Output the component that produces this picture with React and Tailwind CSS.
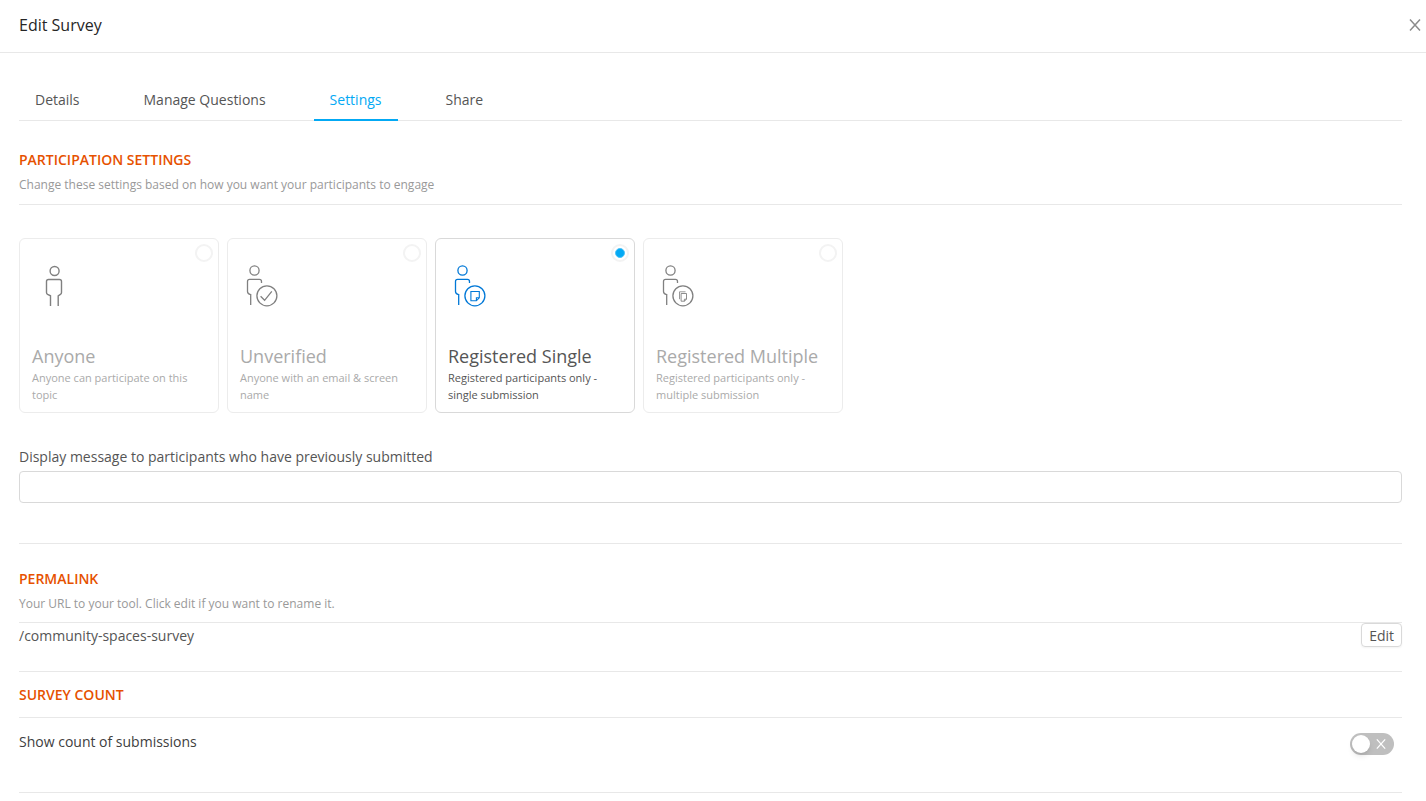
import React, { useState } from "react";

const tabs = ["Details", "Manage Questions", "Settings", "Share"];

const participationOptions = [
  {
    id: "anyone",
    title: "Anyone",
    description: "Anyone can participate on this topic",
  },
  {
    id: "unverified",
    title: "Unverified",
    description: "Anyone with an email & screen name",
  },
  {
    id: "single",
    title: "Registered Single",
    description: "Registered participants only - single submission",
  },
  {
    id: "multiple",
    title: "Registered Multiple",
    description: "Registered participants only - multiple submission",
  },
];

function ParticipantIcon({ type }) {
  if (type === "anyone") {
    return (
      <svg className="h-12 w-12" viewBox="0 0 48 48" fill="none" stroke="currentColor" strokeWidth="1.4">
        <circle cx="22.6" cy="9" r="4.5" />
        <path d="M18.5 44V33.8L15.6 32.4Q14.5 31.8 14.5 30.5V19.5Q14.5 17.5 16.5 17.5H27.5Q29.5 17.5 29.5 19.5V30.5Q29.5 31.8 28.4 32.4L26.2 33.8V44" />
      </svg>
    );
  }

  return (
    <svg className="h-12 w-12" viewBox="0 0 48 48" fill="none" stroke="currentColor" strokeWidth="1.3">
      <circle cx="14.5" cy="8.5" r="4.6" />
      <path d="M21.5 21V19.5Q21.5 17.4 19.4 17.4H9.6Q7.5 17.4 7.5 19.5V29.5Q7.5 32 10.7 32.6V43" />
      <circle cx="26.9" cy="33.8" r="10" />
      {type === "unverified" && <path d="M20.6 34.3L24.6 38.3L31.8 29.4" />}
      {type === "single" && (
        <path d="M22.9 29.5H31.3V35.8L28.4 38.8H22.9ZM31.3 35.8H28.4V38.8" strokeWidth="1.1" />
      )}
      {type === "multiple" && (
        <>
          <path d="M25.1 31.5H30.5V37.2L28.4 39.2H25.1ZM30.5 37.2H28.4V39.2" strokeWidth="0.9" />
          <path d="M23.5 37.2V29.8H29.5" strokeWidth="0.8" />
        </>
      )}
    </svg>
  );
}

function CloseIcon({ className }) {
  return (
    <svg className={className} viewBox="0 0 12 12" fill="none" stroke="currentColor" strokeWidth="1.5">
      <path d="M1 0.5L11 11.5M11 0.5L1 11.5" />
    </svg>
  );
}

function SectionHeader({ title, subtitle, className }) {
  return (
    <div className={`border-b border-[#e8e8e8] ${className}`}>
      <h2 className="text-sm leading-[22px] font-semibold text-[#e65100] uppercase">
        {title}
      </h2>
      {subtitle && (
        <p className="mt-1 text-xs leading-5 text-[#999999]">{subtitle}</p>
      )}
    </div>
  );
}

export default function App() {
  const [activeTab, setActiveTab] = useState("Settings");
  const [participation, setParticipation] = useState("single");
  const [message, setMessage] = useState("");
  const [showCount, setShowCount] = useState(false);

  return (
    <div className="min-h-screen bg-white font-['Open_Sans',sans-serif] text-sm leading-[22px] text-[#555555]">
      <header className="flex items-center justify-between border-b border-[#e8e8e8] pt-[14px] pb-4 pr-[5px] pl-[19px]">
        <h1 className="text-base leading-[22px] text-[#262626]">Edit Survey</h1>
        <button type="button" aria-label="Close" className="cursor-pointer text-[#8c8c8c]">
          <CloseIcon className="h-3 w-3" />
        </button>
      </header>

      <main className="pt-6 pr-6 pl-[19px]">
        <nav className="flex gap-8 border-b border-[#e8e8e8]">
          {tabs.map((tab) => (
            <button
              key={tab}
              type="button"
              onClick={() => setActiveTab(tab)}
              className={`-mb-px cursor-pointer border-b-2 px-4 pt-3 pb-2 ${
                activeTab === tab
                  ? "border-[#03a9f4] text-[#03a9f4]"
                  : "border-transparent"
              }`}
            >
              {tab}
            </button>
          ))}
        </nav>

        <SectionHeader
          title="Participation Settings"
          subtitle="Change these settings based on how you want your participants to engage"
          className="mt-7 pb-[9px]"
        />

        <div className="mt-[33px] flex flex-wrap gap-2">
          {participationOptions.map((option) => {
            const selected = participation === option.id;
            return (
              <label
                key={option.id}
                className={`flex w-[200px] cursor-pointer flex-col rounded-md border pt-[5px] pb-[9px] pl-3 ${
                  selected
                    ? "border-[#d9d9d9] text-[#555555]"
                    : "border-[#ececec] text-[#aaaaaa]"
                }`}
              >
                <span className="flex items-start justify-between pr-[5px]">
                  <span className={`pt-[18px] ${selected ? "text-[#0078d7]" : "text-[#808080]"}`}>
                    <ParticipantIcon type={option.id} />
                  </span>
                  <input
                    type="radio"
                    name="participation"
                    value={option.id}
                    checked={selected}
                    onChange={() => setParticipation(option.id)}
                    className="h-[18px] w-[18px] appearance-none rounded-full border-2 border-[#f3f3f3] bg-white p-[2px] before:block before:h-[10px] before:w-[10px] before:rounded-full checked:before:border checked:before:border-[#4fc3f7] checked:before:bg-[#03a9f4]"
                  />
                </span>
                <span className="mt-[34px] text-lg leading-6">{option.title}</span>
                <span className="pr-5 pt-px text-[11px] leading-[17px]">
                  {option.description}
                </span>
              </label>
            );
          })}
        </div>

        <div className="mt-[33px] border-b border-[#e8e8e8] pb-10">
          <label htmlFor="message" className="block">
            Display message to participants who have previously submitted
          </label>
          <input
            id="message"
            type="text"
            value={message}
            onChange={(e) => setMessage(e.target.value)}
            className="mt-[3px] block h-8 w-full rounded border border-[#d9d9d9] px-3 outline-none focus:border-[#03a9f4]"
          />
        </div>

        <SectionHeader
          title="Permalink"
          subtitle="Your URL to your tool. Click edit if you want to rename it."
          className="mt-6 pb-2"
        />
        <div className="flex items-end justify-between border-b border-[#e8e8e8] pb-6">
          <span>/community-spaces-survey</span>
          <button
            type="button"
            className="h-6 cursor-pointer rounded border border-[#d9d9d9] px-[7px] leading-6 shadow-xs"
          >
            Edit
          </button>
        </div>

        <SectionHeader title="Survey Count" className="mt-3 pb-[11px]" />
        <div className="flex items-start justify-between border-b border-[#e8e8e8] pt-[13px] pr-2 pb-[37px]">
          <label htmlFor="show-count" className="text-[#404040]">
            Show count of submissions
          </label>
          <span className="relative mt-[2px] flex">
            <input
              id="show-count"
              type="checkbox"
              role="switch"
              checked={showCount}
              onChange={(e) => setShowCount(e.target.checked)}
              className="h-[22px] w-11 cursor-pointer appearance-none rounded-full bg-[#bfbfbf] p-[2px] before:block before:h-[18px] before:w-[18px] before:rounded-full before:bg-white before:shadow-md checked:bg-[#03a9f4] checked:before:ml-auto"
            />
            {!showCount && (
              <CloseIcon className="pointer-events-none absolute top-[6px] right-2 h-[10px] w-[10px] text-white" />
            )}
          </span>
        </div>
      </main>
    </div>
  );
}
